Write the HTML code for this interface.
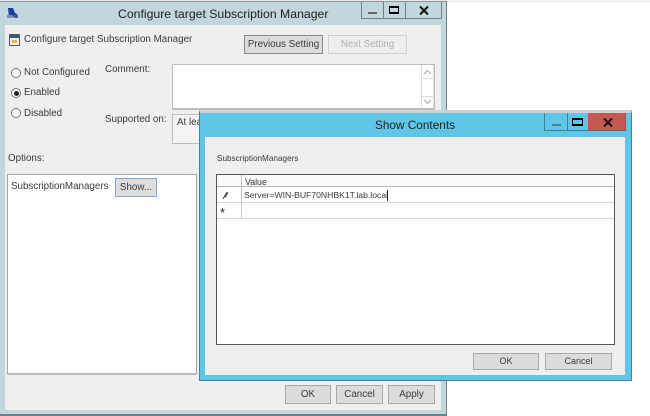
<!DOCTYPE html>
<html><head><meta charset="utf-8"><style>
html,body{margin:0;padding:0;background:#fff}
body{width:650px;height:416px;position:relative;overflow:hidden;font-family:"Liberation Sans",sans-serif;font-size:9.800px;color:#3a3a3a}
div{position:absolute;box-sizing:border-box}
.t{white-space:nowrap;line-height:14px;filter:blur(.35px)}
.btn{background:#dcdcdc;border:1px solid #a9a9a9;text-align:center;color:#3a3a3a}
.rad{width:10px;height:10px;border:1px solid #777;border-radius:50%;background:#fff}
</style></head><body>
<div style="left:0;top:0;width:650px;height:2px;background:#e9e9e9"></div>
<div style="left:447px;top:0;width:203px;height:1px;background:#f4f4f4"></div>

<!-- back window -->
<div style="left:0;top:1px;width:447px;height:415px;background:#c2d6dd;border-right:1px solid #6f8087;border-bottom:2px solid #6f8087;border-top:1px solid #8b9a9f"></div>
<div style="left:5px;top:25px;width:436px;height:385px;background:#efefef"></div>
<svg style="position:absolute;left:6px;top:7px" width="13" height="13" viewBox="0 0 13 13"><path d="M2 1h5l2 5 2 1v3H3z" fill="#1f3f9c"/><path d="M1 8h6v3H1z" fill="#7d8fb0"/><path d="M8 8h4v3H8z" fill="#4a5f8a"/></svg>
<div class="t" style="left:118px;top:6px;font-size:12.250px;color:#222;line-height:16px">Configure target Subscription Manager</div>
<div style="left:361px;top:2px;width:81px;height:17px;border:1px solid #6f8087;border-top:0;background:#c2d6dd"></div>
<div style="left:383px;top:2px;width:1px;height:16px;background:#6f8087"></div>
<div style="left:405px;top:2px;width:1px;height:16px;background:#6f8087"></div>
<div style="left:368px;top:12px;width:9px;height:2px;background:#666"></div>
<div style="left:389px;top:6px;width:10px;height:8px;border:1px solid #000;border-top-width:2px;border-bottom-width:2px"></div>
<svg style="position:absolute;left:419px;top:6px" width="10" height="9" viewBox="0 0 10 9"><path d="M1 .5l8 8M9 .5l-8 8" stroke="#111" stroke-width="2"/></svg>

<svg style="position:absolute;left:9px;top:34px" width="11" height="12" viewBox="0 0 11 12"><rect x=".5" y=".5" width="10" height="11" fill="#f2efe4" stroke="#556"/><rect x="1" y="1" width="9" height="3" fill="#3d5a6c"/><rect x="3" y="6" width="5" height="3" fill="#d9b95c"/></svg>
<div class="t" style="left:24px;top:33px">Configure target Subscription Manager</div>
<div class="btn t" style="left:244px;top:35px;width:79px;height:19px;border-color:#8a8a8a;line-height:17px">Previous Setting</div>
<div class="btn t" style="left:328px;top:35px;width:79px;height:19px;background:#eee;border-color:#d0d0d0;color:#b0b0b0;line-height:17px">Next Setting</div>

<div class="rad" style="left:11px;top:68px"></div>
<div class="t" style="left:24px;top:66px">Not Configured</div>
<div class="rad" style="left:11px;top:88px"></div>
<div style="left:14px;top:91px;width:5px;height:5px;border-radius:50%;background:#222"></div>
<div class="t" style="left:24px;top:86px">Enabled</div>
<div class="rad" style="left:11px;top:108px"></div>
<div class="t" style="left:24px;top:107px">Disabled</div>

<div class="t" style="left:105px;top:63px">Comment:</div>
<div style="left:172px;top:64px;width:263px;height:46px;background:#fff;border:1px solid #bdbdbd;border-bottom-width:2px"></div>
<div style="left:421px;top:65px;width:13px;height:43px;background:#fff;border-left:1px solid #ddd;border-right:1px solid #ddd"></div>
<div style="left:421px;top:78px;width:13px;height:1px;background:#ddd"></div>
<div style="left:421px;top:96px;width:13px;height:1px;background:#ddd"></div>
<svg style="position:absolute;left:423px;top:69px" width="9" height="36" viewBox="0 0 9 36"><path d="M1 5l3.500-3.500L8 5M1 31l3.500 3.500L8 31" stroke="#aaa" fill="none"/></svg>

<div class="t" style="left:105px;top:113px">Supported on:</div>
<div style="left:172px;top:114px;width:263px;height:30px;background:#f4f4f4;border:1px solid #bdbdbd"></div>
<div class="t" style="left:177px;top:116px">At lea</div>

<div class="t" style="left:8px;top:152px">Options:</div>
<div style="left:7px;top:174px;width:190px;height:201px;background:#fff;border:1px solid #a8a8a8;border-bottom:2px solid #bbb"></div>
<div class="t" style="left:11px;top:180px">SubscriptionManagers</div>
<div class="btn t" style="left:115px;top:178px;width:42px;height:19px;border-color:#7eaad0;line-height:18px;background:#dedede">Show...</div>

<div class="btn t" style="left:285px;top:385px;width:46px;height:19px;line-height:18px">OK</div>
<div class="btn t" style="left:336px;top:385px;width:47px;height:19px;line-height:18px">Cancel</div>
<div class="btn t" style="left:388px;top:385px;width:47px;height:19px;line-height:18px">Apply</div>

<!-- front window -->
<div style="left:199px;top:110px;width:433px;height:271px;background:#5fc6e8;border:1px solid #4d7f92;border-top:3px solid #d2d2d2"></div>
<div style="left:205px;top:137px;width:420px;height:238px;background:#efefef"></div>
<div class="t" style="left:375px;top:117px;font-size:11.800px;color:#222;line-height:16px">Show Contents</div>
<div style="left:544px;top:113px;width:82px;height:18px;border:1px solid #3c7f98;border-top:0;border-right:0"></div>
<div style="left:567px;top:113px;width:1px;height:17px;background:#3c7f98"></div>
<div style="left:588px;top:113px;width:38px;height:18px;background:#c25a50;border-bottom:1px solid #8a5a5a;border-right:1px solid #8a5a5a"></div>
<div style="left:552px;top:124px;width:9px;height:2px;background:#4a7f95"></div>
<div style="left:572px;top:118px;width:11px;height:8px;border:1px solid #000;border-top-width:2px;border-bottom-width:2px"></div>
<svg style="position:absolute;left:603px;top:118px" width="10" height="9" viewBox="0 0 10 9"><path d="M1 .5l8 8M9 .5l-8 8" stroke="#111" stroke-width="2"/></svg>

<div class="t" style="left:217px;top:152px;font-size:8.200px">SubscriptionManagers</div>
<div style="left:216px;top:174px;width:399px;height:171px;background:#fff;border:1px solid #555"></div>
<div style="left:217px;top:175px;width:397px;height:12px;background:#fafafa;border-bottom:1px solid #b5b5b5"></div>
<div style="left:217px;top:202px;width:397px;height:1px;background:#d8d8d8"></div>
<div style="left:217px;top:218px;width:397px;height:1px;background:#d8d8d8"></div>
<div style="left:241px;top:175px;width:1px;height:43px;background:#c8c8c8"></div>
<div class="t" style="left:245px;top:176px;font-size:8.800px;line-height:13px">Value</div>
<svg style="position:absolute;left:221px;top:191px" width="8" height="9" viewBox="0 0 8 9"><path d="M6 1L3 6 2 8M7 1.500L4 6.500" stroke="#444" stroke-width="1" fill="none"/></svg>
<div class="t" style="left:244px;top:188px;font-size:8.650px">Server=WIN-BUF70NHBK1T.lab.local</div>
<div style="left:387px;top:190px;width:1px;height:11px;background:#222"></div>
<div class="t" style="left:220px;top:206px;font-size:13px;color:#222;line-height:14px">*</div>

<div class="btn t" style="left:473px;top:353px;width:66px;height:17px;font-size:9px;line-height:15px">OK</div>
<div class="btn t" style="left:545px;top:353px;width:67px;height:17px;font-size:9px;line-height:15px">Cancel</div>
</body></html>
